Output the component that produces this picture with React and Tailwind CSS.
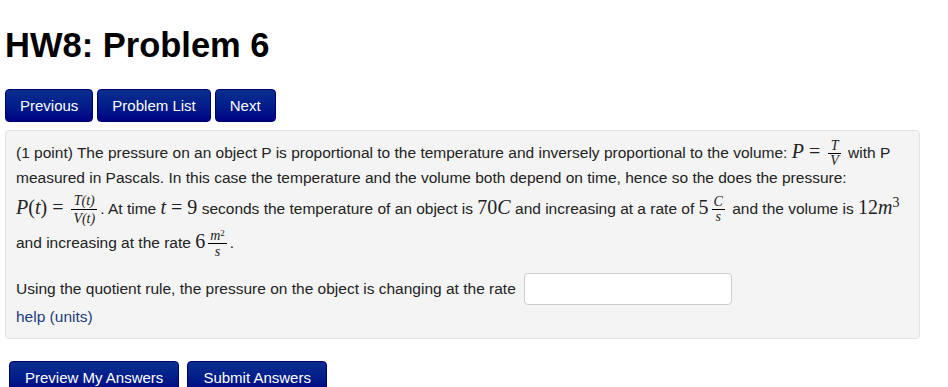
import React from "react";

const btn =
  "h-[33px] px-[14px] rounded-[4px] border border-[#00006a] bg-gradient-to-b from-[#0d2e8f] to-[#000085] text-white text-[15px] leading-none";

const serif = { fontFamily: '"Liberation Serif", "DejaVu Serif", serif' };

function M({ children }) {
  return (
    <span className="italic text-[20px]" style={serif}>
      {children}
    </span>
  );
}

function N({ children, className = "" }) {
  return (
    <span className={"text-[20px] " + className} style={serif}>
      {children}
    </span>
  );
}

function Eq() {
  return <N className="mx-[5px]">=</N>;
}

function Frac({ top, bottom, className = "" }) {
  return (
    <span
      className={
        "inline-flex flex-col items-center align-middle mx-[3px] italic text-[14px] " +
        className
      }
      style={serif}
    >
      <span className="px-[2px] pb-[1px]">{top}</span>
      <span className="self-stretch border-t border-black" />
      <span className="px-[2px] pt-[1px]">{bottom}</span>
    </span>
  );
}

export default function App() {
  return (
    <div
      className="bg-white text-[#222] px-[5px]"
      style={{ fontFamily: '"Liberation Sans", Arial, sans-serif' }}
    >
      {/* Title */}
      <h1 className="pt-[25px] text-[34.5px] leading-[40px] font-bold text-black">
        HW8: Problem 6
      </h1>

      {/* Nav */}
      <div className="flex gap-[4px] mt-[24px]">
        <button className={btn}>Previous</button>
        <button className={btn}>Problem List</button>
        <button className={btn}>Next</button>
      </div>

      {/* Problem */}
      <div className="mt-[8px] w-[915px] rounded-[4px] border border-[#e3e3e3] bg-[#f4f4f4] px-[10px] pt-[9px] pb-[10px] text-[15.5px] leading-[22px]">
        <div>
          (1 point) The pressure on an object P is proportional to the
          temperature and inversely proportional to the volume:{" "}
          <M>P</M>
          <Eq />
          <Frac top="T" bottom="V" className="leading-[12px]" /> with P
        </div>
        <div>
          measured in Pascals. In this case the temperature and the volume both
          depend on time, hence so the does the pressure:
        </div>
        <div className="mt-[4px]">
          <M>P</M>
          <N>(</N>
          <M>t</M>
          <N>)</N>
          <Eq />
          <Frac top="T(t)" bottom="V(t)" className="leading-[15px]" />. At time{" "}
          <M>t</M>
          <Eq />
          <N>9</N> seconds the temperature of an object is <N>70</N>
          <M>C</M> and increasing at a rate of <N>5</N>
          <Frac top="C" bottom="s" className="leading-[12px]" /> and the volume
          is <N>12</N>
          <M>m</M>
          <sup className="text-[14px]" style={serif}>
            3
          </sup>
        </div>
        <div className="mt-[3px]">
          and increasing at the rate <N>6</N>
          <Frac
            className="leading-[13px]"
            top={
              <>
                m<sup className="text-[9px] not-italic">2</sup>
              </>
            }
            bottom="s"
          />
          .
        </div>

        <div className="mt-[15px] flex items-center">
          <span>Using the quotient rule, the pressure on the object is changing at the rate</span>
          <input
            type="text"
            className="ml-[8px] w-[208px] h-[32px] rounded-[4px] border border-[#cccccc] bg-white"
          />
        </div>
        <a className="block mt-[1px] text-[#1c3c7d]">help (units)</a>
      </div>

      {/* Submit */}
      <div className="flex gap-[8px] mt-[22px] ml-[4px]">
        <button className={btn + " !px-[15px]"}>Preview My Answers</button>
        <button className={btn + " !px-[15px]"}>Submit Answers</button>
      </div>
    </div>
  );
}
